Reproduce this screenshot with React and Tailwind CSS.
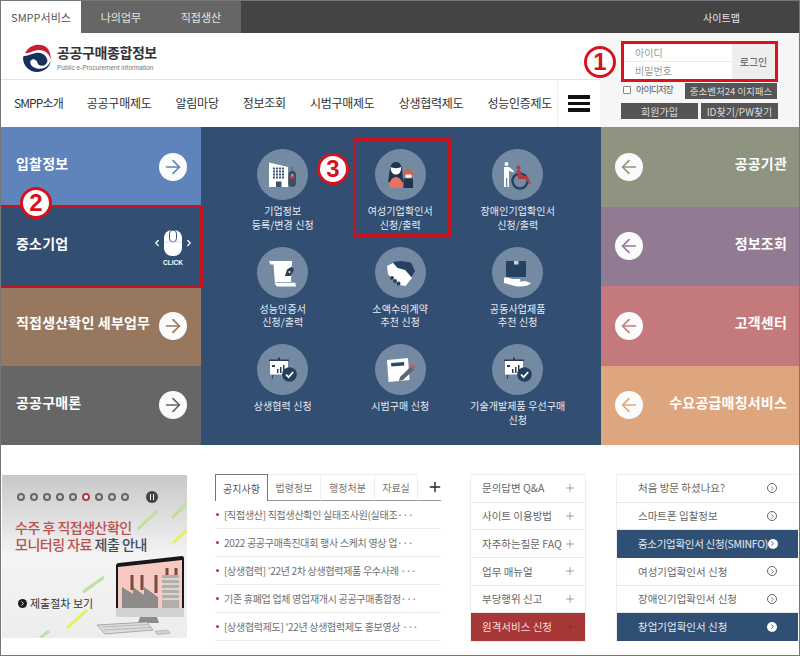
import React from "react";
import { ArrowRight, ArrowLeft, Plus, ChevronRight, ChevronLeft } from "lucide-react";

const navItems = ["SMPP소개", "공공구매제도", "알림마당", "정보조회", "시범구매제도", "상생협력제도", "성능인증제도"];

const leftRows = [
  { label: "입찰정보", bg: "bg-[#5f84bc]", arrow: "text-[#5f84bc]" },
  { label: "중소기업", bg: "bg-[#324e72] relative z-10 outline-[3px] outline-[#c8141e] -outline-offset-1", click: true },
  { label: "직접생산확인 세부업무", bg: "bg-[#97775e]", arrow: "text-[#97775e]" },
  { label: "공공구매론", bg: "bg-[#666666]", arrow: "text-[#666666]" },
];

const rightRows = [
  { label: "공공기관", bg: "bg-[#8e9480]", arrow: "text-[#8e9480]" },
  { label: "정보조회", bg: "bg-[#917b93]", arrow: "text-[#917b93]" },
  { label: "고객센터", bg: "bg-[#c47a7c]", arrow: "text-[#c47a7c]" },
  { label: "수요공급매칭서비스", bg: "bg-[#dea67f]", arrow: "text-[#dea67f]" },
];

const notices = [
  "[직접생산] 직접생산확인 실태조사원(실태조···",
  "2022 공공구매촉진대회 행사 스케치 영상 업···",
  "[상생협력] '22년 2차 상생협력제품 우수사례 ···",
  "기존 휴폐업 업체 영업재개시 공공구매종합정···",
  "[상생협력제도] '22년 상생협력제도 홍보영상 ···",
];

const helpRows = ["문의답변 Q&A", "사이트 이용방법", "자주하는질문 FAQ", "업무 매뉴얼", "부당행위 신고"];

const certRows = [
  { label: "처음 방문 하셨나요?" },
  { label: "스마트폰 입찰정보" },
  { label: "중소기업확인서 신청(SMINFO)", blue: true },
  { label: "여성기업확인서 신청" },
  { label: "장애인기업확인서 신청" },
  { label: "창업기업확인서 신청", blue: true },
];

function IconBuilding() {
  const win = [];
  for (let r = 0; r < 4; r++) for (let c = 0; c < 4; c++) win.push(<rect key={r + "-" + c} x={16 + c * 3} y={18.5 + r * 3} width="2" height="2" fill="#3a5473" />);
  return (
    <svg viewBox="0 0 51 51" className="w-full h-full">
      <path d="M12 13.5 L31 18 V38 H12 Z" fill="#fff" />
      {win}
      <rect x="19" y="32.5" width="5.5" height="5.5" fill="#3a5473" />
      <rect x="31.5" y="22" width="7.5" height="16" rx="3.7" fill="#454b57" />
      <path d="M35 18 v5" stroke="#3a4450" strokeWidth="0.8" />
      <circle cx="35.2" cy="27.5" r="2" fill="#d0444c" />
      <rect x="34.7" y="25" width="1" height="1.6" fill="#fff" />
    </svg>
  );
}
function IconWoman() {
  return (
    <svg viewBox="0 0 51 51" className="w-full h-full">
      <path d="M13 33 C15 27 13 13 21 13 C29 13 27 27 28.5 33 Z" fill="#22344c" />
      <path d="M15.5 18 C18 19.5 24 19.5 26 18 C26.5 23 24 25.5 21 25.5 C18 25.5 15.5 23 15.5 18 Z" fill="#fff" />
      <path d="M14 39 C14 32 17 28 21 28 C25 28 28 32 28 39 Z" fill="#e9715f" />
      <circle cx="33.5" cy="25" r="4.6" fill="#d9604c" />
      <rect x="30.5" y="25.5" width="6" height="3.2" rx="1.2" fill="#fff" />
      <rect x="28.5" y="29.5" width="9.5" height="9.5" fill="#22344c" />
    </svg>
  );
}
function IconWheelchair() {
  return (
    <svg viewBox="0 0 51 51" className="w-full h-full">
      <circle cx="14.5" cy="15" r="2" fill="#fff" />
      <path d="M12 18 H17 L22 22 L21 23.5 L17 21.5 V38 H15.3 V29 H14 V38 H12 Z" fill="#fff" />
      <circle cx="28" cy="32" r="7.5" fill="none" stroke="#27405e" strokeWidth="2.4" />
      <circle cx="26.5" cy="18.5" r="2" fill="#b23a3f" />
      <path d="M24.5 21 H28 L29.5 27 H35 L39 34.5 H36.5 L33.5 30 H26 Z" fill="#b23a3f" />
    </svg>
  );
}
function IconScroll() {
  return (
    <svg viewBox="0 0 51 51" className="w-full h-full">
      <path d="M12 14 H35 L34 35 H38 L39 39.5 H20 L18 37 L16.5 17.5 H13.5 Z" fill="#fff" />
      <path d="M18.5 35.5 H38" stroke="#748aa3" strokeWidth="0.7" />
      <path d="M28 29 L30 22.5 L34 20 L37 21.5 L36 25 L33.5 29 Z" fill="#2e3f55" />
      <circle cx="32.5" cy="25" r="1" fill="#fff" />
    </svg>
  );
}
function IconHandshake() {
  return (
    <svg viewBox="0 0 51 51" className="w-full h-full">
      <path d="M18 15 L26 14 L36 15.5 L40 24 L36.5 30 L30 23 L22 21 Z" fill="#25415f" />
      <path d="M12 19 L18 16 L22.5 21 L30 23 L37 31 L30.5 39 L25 38 L18 33 L13 27 Z" fill="#fff" />
      <circle cx="17" cy="31" r="2" fill="#25415f" />
      <circle cx="20" cy="34" r="2" fill="#25415f" />
      <circle cx="23.5" cy="36.5" r="2" fill="#25415f" />
    </svg>
  );
}
function IconBox() {
  return (
    <svg viewBox="0 0 51 51" className="w-full h-full">
      <rect x="14" y="14" width="20" height="16" fill="#25415f" />
      <rect x="22" y="14" width="4.5" height="3.5" fill="#c9d2dc" />
      <path d="M12 31 C14 29 17 31 20 32 H27 C29 32 29 35 26 35 L33 34 L39 36 C37 38.5 33 39.5 27 39.5 C21 39.5 17 37 12 36 Z" fill="#fff" />
    </svg>
  );
}
function IconBoard() {
  return (
    <svg viewBox="0 0 51 51" className="w-full h-full">
      <rect x="21" y="13.5" width="2" height="3" fill="#2a3e55" />
      <rect x="12" y="15.5" width="20" height="1.6" fill="#2a3e55" />
      <rect x="13" y="17" width="18" height="13.5" fill="#fff" />
      <rect x="15" y="21" width="3" height="2" fill="#2a3e55" />
      <rect x="20" y="25" width="1.5" height="4" fill="#2a3e55" />
      <rect x="23" y="23" width="1.5" height="6" fill="#2a3e55" />
      <rect x="26" y="21" width="1.5" height="8" fill="#2a3e55" />
      <path d="M16 31 L15 35 M26 31 L27 35" stroke="#2a3e55" strokeWidth="1" />
      <circle cx="32.5" cy="30.5" r="7.3" fill="#24405a" />
      <path d="M29 30.5 L31.6 33.2 L36.2 28" stroke="#fff" strokeWidth="1.8" fill="none" />
    </svg>
  );
}
function IconPad() {
  return (
    <svg viewBox="0 0 51 51" className="w-full h-full">
      <path d="M12 16 L33 14 L34.5 36 L13.5 38 Z" fill="#fff" />
      <path d="M16 19 L29 18 L29.3 21.5 L16.3 22.5 Z" fill="#2e4a6b" />
      <path d="M25 33 L36 22.5 L39 25.5 L28 36 L24 37 Z" fill="#5f6670" />
      <path d="M36 21.5 L37.5 20 L40 23 L39 25 Z" fill="#d0505a" />
    </svg>
  );
}

const tiles = [
  { icon: <IconBuilding />, lines: ["기업정보", "등록/변경 신청"] },
  { icon: <IconWoman />, lines: ["여성기업확인서", "신청/출력"], mark: true },
  { icon: <IconWheelchair />, lines: ["장애인기업확인서", "신청/출력"] },
  { icon: <IconScroll />, lines: ["성능인증서", "신청/출력"] },
  { icon: <IconHandshake />, lines: ["소액수의계약", "추천 신청"] },
  { icon: <IconBox />, lines: ["공동사업제품", "추천 신청"] },
  { icon: <IconBoard />, lines: ["상생협력 신청"] },
  { icon: <IconPad />, lines: ["시범구매 신청"] },
  { icon: <IconBoard />, lines: ["기술개발제품 우선구매", "신청"] },
];

function Badge({ n, className }) {
  return (
    <div className={"absolute z-20 w-[32px] h-[32px] rounded-full bg-white border-[3px] border-[#d8111c] flex items-center justify-center text-[#d8111c] font-bold text-[24px] leading-none font-['Liberation_Sans',sans-serif] " + className}>
      {n}
    </div>
  );
}

function SideRow({ row, side }) {
  const circle = (
    <span className="w-[28px] h-[28px] rounded-full bg-[#fbfbfb] flex items-center justify-center shrink-0">
      {side === "left" ? <ArrowRight size={22} strokeWidth={1.8} className={row.arrow} /> : <ArrowLeft size={22} strokeWidth={1.8} className={row.arrow} />}
    </span>
  );
  if (side === "left") {
    return (
      <div className={"h-[79.5px] flex items-center justify-between pl-[15px] pr-[14px] " + row.bg}>
        <span className="text-white font-bold text-[14px] tracking-[0.2px] -mt-[6px]">{row.label}</span>
        {row.click ? (
          <div className="flex flex-col items-center -mr-[7px] mt-[3px]">
            <div className="flex items-center gap-[1px]">
              <ChevronLeft size={10} strokeWidth={3} className="text-white" />
              <svg viewBox="0 0 20 28" className="w-[20px] h-[28px]">
                <rect x="1" y="1" width="18" height="26" rx="8" fill="#fff" />
                <rect x="6.5" y="1" width="7" height="12" rx="3.5" fill="#fff" stroke="#324e72" strokeWidth="1" />
                <path d="M1 13 H19" stroke="#d5dbe3" strokeWidth="1" />
              </svg>
              <ChevronRight size={10} strokeWidth={3} className="text-white" />
            </div>
            <span className="text-white font-bold text-[6.5px] leading-[8px] mt-[2px] font-['Liberation_Sans',sans-serif]">CLICK</span>
          </div>
        ) : circle}
      </div>
    );
  }
  return (
    <div className={"h-[79.5px] flex items-center justify-between pl-[14px] pr-[12px] " + row.bg}>
      {circle}
      <span className="text-white font-bold text-[14px] tracking-[0.2px] -mt-[6px]">{row.label}</span>
    </div>
  );
}

function Banner() {
  const dots = [0, 1, 2, 3, 4, 5, 6, 7, 8];
  return (
    <div className="relative w-[185px] h-[163px] mt-[1px] ml-[1px] overflow-hidden bg-gradient-to-b from-[#c8c8c8] via-[#f4f4f4] to-[#ededed]">
      <svg viewBox="0 0 185 163" className="absolute inset-0 w-full h-full">
        <path d="M136 54 L155 36 M170 43 L185 28" stroke="#bfe09a" strokeWidth="3" />
        <path d="M171 68 L185 55" stroke="#e4f05c" strokeWidth="3" />
        <path d="M81 117 L102 102" stroke="#bfe09a" strokeWidth="3" />
        <path d="M65 153 L85 135" stroke="#e4f05c" strokeWidth="3" />
        <path d="M38 163 L47 156" stroke="#bfe09a" strokeWidth="3" />
        <path d="M114 91 Q114 88 117 88 L180 81 Q182 81 182 84 V134 H114 Z" fill="#16181c" />
        <path d="M116 92 L180 85 V133 H116 Z" fill="#f6c9c2" />
        <path d="M120 133 V112 L131 119 V112 L142 120 V112 L156 122 V133 Z" fill="#8d8b8a" />
        <path d="M130 115 V100 M140 115 V100 M154 118 V100" stroke="#7b4a3a" strokeWidth="3" />
        <rect x="160" y="100" width="17" height="33" fill="#b3aeaa" />
        <path d="M160 104 H177 M160 109 H177 M160 114 H177 M160 119 H177 M160 124 H177" stroke="#e8e2de" strokeWidth="1.6" />
        <path d="M165 100 V93 M174 100 V93" stroke="#7b4a3a" strokeWidth="3" />
        <rect x="114" y="133" width="68" height="9" fill="#d2d2d2" />
        <path d="M138 142 H155 L157 148 H136 Z" fill="#8a8c8e" />
        <path d="M95 150 L145 147 L151 155 L103 159 Z" fill="#dcdcdc" stroke="#8f8f8f" strokeWidth="0.7" />
        <path d="M100 152 L146 149.5 M102 155 L149 152.5" stroke="#a8a8a8" strokeWidth="0.7" />
        <path d="M153 156 L166 155 L168 158.5 L155 159.5 Z" fill="#cfcfcf" stroke="#a0a0a0" strokeWidth="0.5" />
      </svg>
      <div className="absolute left-[15px] top-[18px] flex gap-[5px] items-center">
        {dots.map((d) => (
          <span key={d} className={"w-[8px] h-[8px] rounded-full border-2 " + (d === 5 ? "bg-white border-[#b23a3a]" : "bg-[#cfcfcf] border-[#666666]")} />
        ))}
      </div>
      <div className="absolute left-[144px] top-[16px] w-[12px] h-[12px] rounded-full bg-[#444444] flex items-center justify-center gap-[1.5px]">
        <span className="w-[1.5px] h-[6px] bg-white" />
        <span className="w-[1.5px] h-[6px] bg-white" />
      </div>
      <div className="absolute left-[13px] top-[44px] text-[14px] leading-[17px] font-medium tracking-[-0.5px] whitespace-nowrap text-[#bd4f4f]">
        <div>수주 후 직접생산확인</div>
        <div>모니터링 자료 <span className="text-[#3d4c60]">제출 안내</span></div>
      </div>
      <div className="absolute left-[16px] top-[120px] flex items-center gap-[3px] text-[#333333] text-[11px] leading-[16px] whitespace-nowrap">
        <span className="w-[9px] h-[9px] rounded-full bg-[#1c1c1c] flex items-center justify-center">
          <ChevronRight size={7} strokeWidth={3} className="text-white" />
        </span>
        제출절차 보기
      </div>
    </div>
  );
}

export default function App() {
  return (
    <div className="relative w-[800px] h-[656px] overflow-hidden border border-[#777777] bg-white font-['Noto_Sans_CJK_KR','Liberation_Sans',sans-serif]">
      {/* top bar */}
      <div className="h-[32px] bg-[#444444] flex items-stretch text-[11px]">
        <div className="w-[80px] bg-white text-[#555555] flex items-center justify-center">SMPP서비스</div>
        <div className="w-[80px] bg-[#666666] text-[#e4e4e4] flex items-center justify-center">나의업무</div>
        <div className="w-[80px] bg-[#666666] text-[#e4e4e4] flex items-center justify-center">직접생산</div>
        <div className="flex-1" />
        <div className="w-[155px] text-[#e4e4e4] text-[10px] flex items-center justify-center">사이트맵</div>
      </div>

      {/* header */}
      <div className="h-[94px] flex">
        <div className="w-[599px]">
          <div className="h-[47px] border-b border-[#e2e2e2] flex items-start pl-[22px] pt-[11px]">
            <svg viewBox="0 0 80 80" className="w-[28px] h-[28px] shrink-0">
              <path d="M6 26 C16 4 40 -2 58 4 C72 9 80 24 79 44 C76 28 62 16 44 17 C28 18 18 28 6 26 Z" fill="#c8202f" />
              <path d="M2 34 C14 36 24 26 42 25 C58 24 68 36 70 48 C68 60 56 66 46 60 C40 56 42 46 32 44 C24 42 18 50 22 58 C28 70 48 74 62 68 C70 64 76 56 79 48 C78 66 60 80 40 80 C18 80 0 62 0 40 C0 38 1 36 2 34 Z" fill="#16325c" />
            </svg>
            <div className="ml-[6px] flex flex-col">
              <span className="text-[14px] leading-[16px] font-bold text-[#333333] tracking-[-0.4px] whitespace-nowrap">공공구매종합정보</span>
              <span className="text-[6.5px] leading-[9px] mt-[3px] text-[#777777] font-['Liberation_Sans',sans-serif] whitespace-nowrap">Public e-Procurement information</span>
            </div>
          </div>
          <div className="h-[47px] flex items-center pl-[13px]">
            <div className="flex gap-[24px] text-[12px] text-[#333333] whitespace-nowrap -mt-[2px] tracking-[-0.25px]">
              {navItems.map((n, i) => (
                <span key={n} className={i === 0 ? "tracking-[-0.9px]" : ""}>{n}</span>
              ))}
            </div>
            <div className="ml-[5px] w-[44px] self-stretch border-l border-[#eeeeee] flex flex-col items-center justify-center gap-[3px]">
              <span className="w-[22px] h-[3.5px] bg-[#111111]" />
              <span className="w-[22px] h-[3.5px] bg-[#111111]" />
              <span className="w-[22px] h-[3.5px] bg-[#111111]" />
            </div>
          </div>
        </div>
        <div className="flex-1 bg-[#f6f6f6] pl-[21px] pt-[8px]">
          <div className="w-[157px] h-[41px] border-[3px] border-[#df0f1c] flex bg-white">
            <div className="flex-1 flex flex-col text-[10px] text-[#999999]">
              <div className="h-[18px] border-b border-[#e8e8e8] pl-[11px] flex items-center">아이디</div>
              <div className="flex-1 pl-[11px] flex items-center">비밀번호</div>
            </div>
            <div className="w-[43px] bg-[#eeeeee] text-[#555555] text-[10px] flex items-center justify-center">로그인</div>
          </div>
          <div className="flex items-start mt-[1px] h-[18px]">
            <span className="ml-[2px] mt-[3px] w-[8px] h-[8px] border border-[#888888] bg-white rounded-[1px]" />
            <span className="ml-[5px] w-[49px] text-[9px] leading-[13px] tracking-[-0.9px] text-[#555555] whitespace-nowrap">아이디저장</span>
            <div className="w-[92px] h-[16px] bg-[#555555] text-[#dddddd] text-[9.5px] flex items-center justify-center whitespace-nowrap">중소벤처24 이지패스</div>
          </div>
          <div className="flex gap-[3px] mt-[2px]">
            <div className="w-[77px] h-[16px] bg-[#555555] text-[#dddddd] text-[10px] flex items-center justify-center">회원가입</div>
            <div className="w-[77px] h-[16px] bg-[#555555] text-[#dddddd] text-[10px] flex items-center justify-center whitespace-nowrap">ID찾기/PW찾기</div>
          </div>
        </div>
      </div>

      {/* main */}
      <div className="h-[318px] flex">
        <div className="w-[200px]">
          {leftRows.map((r) => (
            <SideRow key={r.label} row={r} side="left" />
          ))}
        </div>
        <div className="w-[400px] bg-[#324e72] pl-[23px] pt-[22px]">
          <div className="grid grid-cols-[repeat(3,117.5px)] auto-rows-[97.5px]">
            {tiles.map((t, i) => (
              <div key={i} className="relative flex flex-col items-center">
                <div className="w-[51px] h-[51px] rounded-full bg-[#748aa3] shrink-0">{t.icon}</div>
                <div className="mt-[4px] text-[10px] leading-[13.5px] tracking-[0.1px] text-[#e8ecf1] text-center whitespace-nowrap">
                  {t.lines.map((l) => (
                    <div key={l}>{l}</div>
                  ))}
                </div>
                {t.mark && <div className="absolute left-[11px] -top-[11px] w-[98px] h-[99px] border-[3px] border-[#c8141e]" />}
              </div>
            ))}
          </div>
        </div>
        <div className="flex-1">
          {rightRows.map((r) => (
            <SideRow key={r.label} row={r} side="right" />
          ))}
        </div>
      </div>

      {/* bottom */}
      <div className="h-[210px] pt-[29px] flex items-start">
        <Banner />
        <div className="w-[226px] ml-[28px]">
          <div className="flex h-[27px] items-stretch">
            <div className="w-[53px] border border-b-0 border-[#777777] text-[10px] text-[#555555] flex items-center justify-center">공지사항</div>
            <div className="w-[53px] border-t border-r border-b border-t-[#eeeeee] border-r-[#eeeeee] border-b-[#999999] text-[10px] text-[#777777] flex items-center justify-center">법령정보</div>
            <div className="w-[54px] border-t border-r border-b border-t-[#eeeeee] border-r-[#eeeeee] border-b-[#999999] text-[10px] text-[#777777] flex items-center justify-center">행정처분</div>
            <div className="w-[43px] border-t border-r border-b border-t-[#eeeeee] border-r-[#eeeeee] border-b-[#999999] text-[10px] text-[#777777] flex items-center justify-center">자료실</div>
            <div className="flex-1 border-b border-[#999999] flex items-center justify-end">
              <Plus size={16} strokeWidth={2} className="text-[#222222] -mr-[2px]" />
            </div>
          </div>
          {notices.map((n) => (
            <div key={n} className="h-[28px] border-b border-[#eeeeee] flex items-center text-[10px] text-[#707070] whitespace-nowrap overflow-hidden tracking-[-0.3px]">
              <span className="w-[3px] h-[3px] rounded-full bg-[#b53a3a] ml-[1px] mr-[5px] shrink-0" />
              {n}
            </div>
          ))}
        </div>
        <div className="w-[116px] ml-[29px] border border-[#eeeeee] text-[10.5px] text-[#666666]">
          {helpRows.map((h) => (
            <div key={h} className="h-[27.7px] border-b border-[#e6e6e6] flex items-center justify-between pl-[11px] pr-[9px] whitespace-nowrap">
              <span>{h}</span>
              <Plus size={12} strokeWidth={1.2} className="text-[#666666]" />
            </div>
          ))}
          <div className="h-[27.7px] bg-[#a83838] text-[#f4dddd] flex items-center justify-between pl-[11px] pr-[9px] whitespace-nowrap">
            <span>원격서비스 신청</span>
            <Plus size={12} strokeWidth={1.2} className="text-[#7c2a2a]" />
          </div>
        </div>
        <div className="w-[182px] ml-[30px] border-t border-l border-[#eeeeee] text-[10.5px]">
          {certRows.map((c) => (
            <div key={c.label} className={"h-[27.7px] flex items-center justify-between pl-[21px] pr-[21px] whitespace-nowrap border-b " + (c.blue ? "bg-[#2f4f75] text-[#e6ebf1] border-[#2f4f75]" : "text-[#666666] border-[#e6e6e6]")}>
              <span className={c.blue && c.label.includes("SMINFO") ? "tracking-[-0.3px]" : ""}>{c.label}</span>
              <span className={"w-[10px] h-[10px] rounded-full flex items-center justify-center shrink-0 " + (c.blue ? "bg-white" : "border border-[#666666]")}>
                <ChevronRight size={7} strokeWidth={3} className={c.blue ? "text-[#2f4f75]" : "text-[#666666]"} />
              </span>
            </div>
          ))}
        </div>
      </div>

      <Badge n="1" className="left-[583px] top-[45px]" />
      <Badge n="2" className="left-[19px] top-[186px]" />
      <Badge n="3" className="left-[316px] top-[152px]" />
    </div>
  );
}
